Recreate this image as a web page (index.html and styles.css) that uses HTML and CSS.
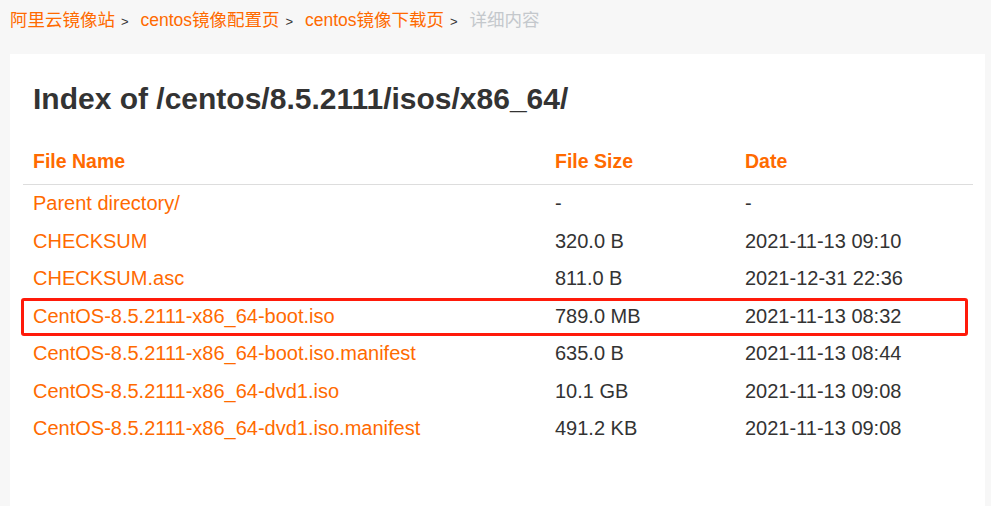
FILE: index.html
```html
<!DOCTYPE html>
<html lang="zh-CN">
<head>
    <meta charset="UTF-8">
    <meta name="viewport" content="width=device-width, initial-scale=1.0">
    <title>Index of /centos/8.5.2111/isos/x86_64/</title>
    <link rel="stylesheet" href="styles.css">
</head>
<body>
    <div class="breadcrumb">
        <a href="#">阿里云镜像站</a><span class="sep">&gt;</span>
        <a href="#">centos镜像配置页</a><span class="sep">&gt;</span>
        <a href="#">centos镜像下载页</a><span class="sep">&gt;</span>
        <span class="current">详细内容</span>
    </div>
    <div class="card">
        <h1>Index of /centos/8.5.2111/isos/x86_64/</h1>
        <div class="list">
            <div class="row head">
                <div>File Name</div>
                <div>File Size</div>
                <div>Date</div>
            </div>
            <div class="row">
                <div><a href="#">Parent directory/</a></div>
                <div>-</div>
                <div>-</div>
            </div>
            <div class="row">
                <div><a href="#">CHECKSUM</a></div>
                <div>320.0 B</div>
                <div>2021-11-13 09:10</div>
            </div>
            <div class="row">
                <div><a href="#">CHECKSUM.asc</a></div>
                <div>811.0 B</div>
                <div>2021-12-31 22:36</div>
            </div>
            <div class="row marked">
                <div><a href="#">CentOS-8.5.2111-x86_64-boot.iso</a></div>
                <div>789.0 MB</div>
                <div>2021-11-13 08:32</div>
            </div>
            <div class="row">
                <div><a href="#">CentOS-8.5.2111-x86_64-boot.iso.manifest</a></div>
                <div>635.0 B</div>
                <div>2021-11-13 08:44</div>
            </div>
            <div class="row">
                <div><a href="#">CentOS-8.5.2111-x86_64-dvd1.iso</a></div>
                <div>10.1 GB</div>
                <div>2021-11-13 09:08</div>
            </div>
            <div class="row">
                <div><a href="#">CentOS-8.5.2111-x86_64-dvd1.iso.manifest</a></div>
                <div>491.2 KB</div>
                <div>2021-11-13 09:08</div>
            </div>
        </div>
    </div>
</body>
</html>
```

FILE: styles.css
```css
body {
    margin: 0;
    background: #f7f7f7;
    font-family: "Liberation Sans", Arial, "Noto Sans CJK SC", sans-serif;
    color: #333;
    height: 100vh;
    display: flex;
    flex-direction: column;
    overflow: hidden;
}

a {
    color: #ff6a00;
    text-decoration: none;
}

.breadcrumb {
    height: 54px;
    flex-shrink: 0;
    box-sizing: border-box;
    padding: 7px 10px 0;
    font-size: 17.5px;
    line-height: 26px;
}

.sep {
    font-size: 13px;
    color: #333;
    margin: 0 7px 0 6px;
}

.current {
    color: #c4c8cc;
}

.card {
    flex: 1;
    background: #fff;
    margin: 0 6px 0 10px;
    padding: 25px 12px 0 13px;
}

h1 {
    margin: 0 0 21px 10px;
    font-size: 30px;
    line-height: 40px;
    color: #333;
}

.row {
    display: grid;
    grid-template-columns: 522px 190px 1fr;
    font-size: 20px;
    line-height: 23.5px;
}

.row > div {
    padding: 7px 10px;
}

.row.head {
    font-weight: bold;
    color: #ff6a00;
    font-size: 19.5px;
    line-height: 24px;
    border-bottom: 1px solid #ddd;
}

.row.head > div {
    padding: 9px 10px 11px;
}

.marked {
    position: relative;
}

.marked::after {
    content: "";
    position: absolute;
    top: 0;
    bottom: -1px;
    left: -2px;
    right: 5px;
    border: 3px solid #ff1a0a;
    border-radius: 3px;
}
```
